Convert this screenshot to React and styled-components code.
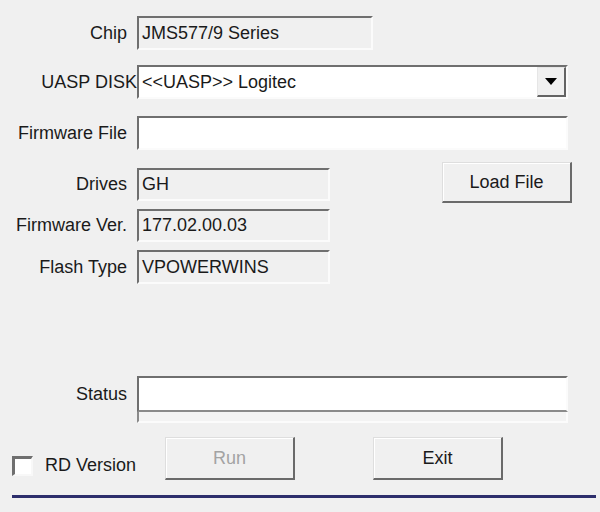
import React from "react";
import styled, { createGlobalStyle } from "styled-components";

const GlobalStyle = createGlobalStyle`
  html, body {
    margin: 0;
    padding: 0;
    background: #f0f0f0;
  }
  body {
    width: 600px;
    height: 512px;
    overflow: hidden;
    font-family: "Liberation Sans", Arial, sans-serif;
    font-size: 18px;
    color: #1a1a1a;
  }
`;

const Dialog = styled.div`
  width: 600px;
  height: 512px;
  box-sizing: border-box;
  padding-top: 16px;
  display: flex;
  flex-direction: column;
`;

// 라벨 + 입력칸 한 줄
const Row = styled.div`
  display: flex;
  align-items: center;
  height: ${(p) => p.h || 34}px;
  margin-top: ${(p) => p.mt || 0}px;
`;

const Label = styled.div`
  width: 137px;
  box-sizing: border-box;
  padding-right: ${(p) => (p.tight ? 0 : 10)}px;
  text-align: right;
  white-space: nowrap;
  flex-shrink: 0;
`;

// 움푹 들어간 텍스트 박스
const Field = styled.div`
  position: relative;
  width: ${(p) => p.w}px;
  height: 100%;
  box-sizing: border-box;
  background: ${(p) => (p.readOnly ? "#f0f0f0" : "#ffffff")};
  border-top: 2px solid #6f6f6f;
  border-left: 2px solid #6f6f6f;
  border-right: 2px solid #fbfbfb;
  border-bottom: 2px solid #fbfbfb;
  padding-left: 3px;
  display: flex;
  align-items: center;
  white-space: nowrap;
`;

const DropButton = styled.div`
  position: absolute;
  top: 0;
  right: 0;
  bottom: 0;
  width: 29px;
  box-sizing: border-box;
  background: #f0f0f0;
  border-top: 1px solid #e6e6e6;
  border-left: 1px solid #e6e6e6;
  border-right: 2px solid #646464;
  border-bottom: 2px solid #646464;
  display: flex;
  align-items: center;
  justify-content: center;
`;

const Arrow = styled.div`
  width: 0;
  height: 0;
  border-left: 6px solid transparent;
  border-right: 6px solid transparent;
  border-top: 7px solid #000;
`;

const Middle = styled.div`
  display: flex;
  margin-top: 12px;
`;

const InfoColumn = styled.div`
  display: flex;
  flex-direction: column;
  padding-top: 6px;
`;

const Button = styled.button`
  width: 130px;
  height: ${(p) => p.h || 43}px;
  margin-left: ${(p) => p.ml || 0}px;
  flex-shrink: 0;
  box-sizing: border-box;
  background: #f0f0f0;
  font-family: "Liberation Sans", Arial, sans-serif;
  font-size: 18px;
  color: ${(p) => (p.disabled ? "#a3a3a3" : "#1a1a1a")};
  border-top: 1px solid #dedede;
  border-left: 1px solid #dedede;
  border-right: 2px solid #6a6a6a;
  border-bottom: 2px solid #6a6a6a;
  box-shadow: inset 1px 1px 0 #ffffff;
  padding: 0;
  cursor: default;
`;

const StatusRow = styled.div`
  display: flex;
  align-items: flex-start;
  margin-top: 92px;
`;

const StatusStack = styled.div`
  display: flex;
  flex-direction: column;
`;

const StatusBox = styled(Field)`
  height: 36px;
  border-bottom: 2px solid #8a8a8a;
`;

const ProgressStrip = styled.div`
  width: 431px;
  height: 11px;
  box-sizing: border-box;
  background: #f3f3f3;
  border-left: 2px solid #8a8a8a;
  border-right: 2px solid #fbfbfb;
  border-bottom: 2px solid #fbfbfb;
`;

const StatusLabel = styled(Label)`
  height: 36px;
  line-height: 36px;
`;

const BottomRow = styled.div`
  display: flex;
  align-items: flex-start;
  margin-top: 14px;
  padding-left: 12px;
`;

const CheckGroup = styled.label`
  display: flex;
  align-items: center;
  gap: 12px;
  width: 153px;
  margin-top: 18px;
`;

const CheckBox = styled.span`
  width: 21px;
  height: 20px;
  box-sizing: border-box;
  background: #ffffff;
  border-top: 3px solid #6f6f6f;
  border-left: 3px solid #6f6f6f;
  border-right: 2px solid #f8f8f8;
  border-bottom: 2px solid #f8f8f8;
`;

const Rule = styled.div`
  margin: 15px 0 0 12px;
  width: 584px;
  height: 3px;
  background: #2d2e6c;
`;

export default function App() {
  return (
    <>
      <GlobalStyle />
      <Dialog>
        <Row>
          <Label>Chip</Label>
          <Field w={236} readOnly>JMS577/9 Series</Field>
        </Row>
        <Row mt={15}>
          <Label tight>UASP DISK</Label>
          <Field w={431}>
            {"<<UASP>> Logitec"}
            <DropButton>
              <Arrow />
            </DropButton>
          </Field>
        </Row>
        <Row mt={17}>
          <Label>Firmware File</Label>
          <Field w={431} />
        </Row>

        <Middle>
          <InfoColumn>
            <Row h={33}>
              <Label>Drives</Label>
              <Field w={193} readOnly>GH</Field>
            </Row>
            <Row h={33} mt={8}>
              <Label>Firmware Ver.</Label>
              <Field w={193} readOnly>177.02.00.03</Field>
            </Row>
            <Row h={34} mt={8}>
              <Label>Flash Type</Label>
              <Field w={193} readOnly>VPOWERWINS</Field>
            </Row>
          </InfoColumn>
          <Button ml={112} h={41}>Load File</Button>
        </Middle>

        <StatusRow>
          <StatusLabel>Status</StatusLabel>
          <StatusStack>
            <StatusBox w={431} />
            <ProgressStrip />
          </StatusStack>
        </StatusRow>

        <BottomRow>
          <CheckGroup>
            <CheckBox />
            RD Version
          </CheckGroup>
          <Button disabled>Run</Button>
          <Button ml={78}>Exit</Button>
        </BottomRow>

        <Rule />
      </Dialog>
    </>
  );
}
